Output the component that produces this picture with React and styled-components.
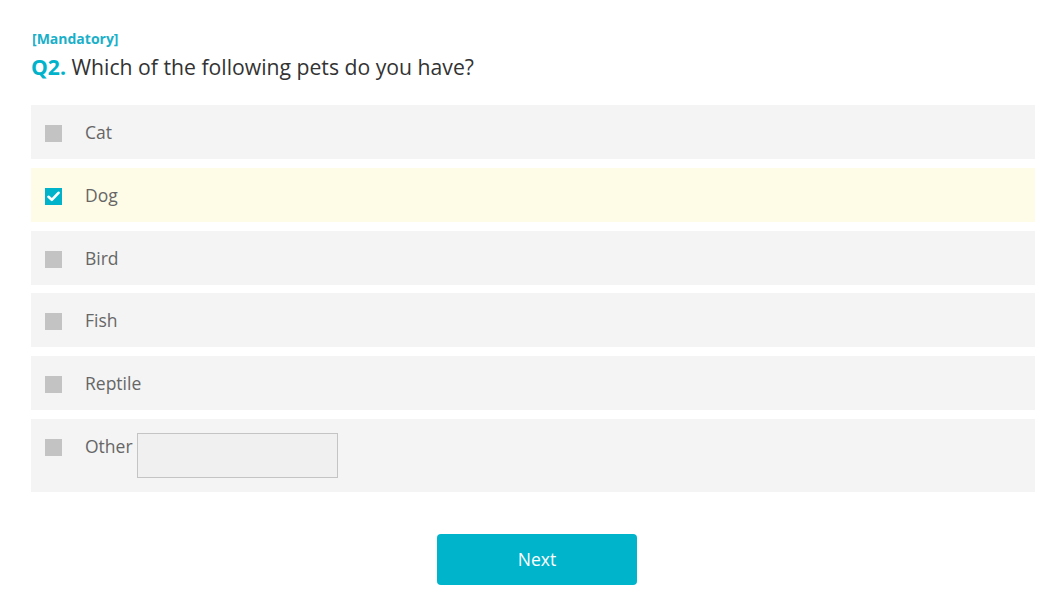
import React, { useState } from "react";
import styled, { createGlobalStyle } from "styled-components";

const GlobalStyle = createGlobalStyle`
  body {
    margin: 0;
    background: #ffffff;
    font-family: "Open Sans", "Noto Sans", sans-serif;
  }
`;

const OPTIONS = ["Cat", "Dog", "Bird", "Fish", "Reptile", "Other"];

function App() {
  const [checked, setChecked] = useState({ Dog: true });
  const [other, setOther] = useState("");

  const toggle = (name) => setChecked({ ...checked, [name]: !checked[name] });

  return (
    <>
      <GlobalStyle />
      <Page>
        <Mandatory>[Mandatory]</Mandatory>
        <Question>
          <QNum>Q2.</QNum> Which of the following pets do you have?
        </Question>

        <OptionList>
          {OPTIONS.map((name) => (
            <OptionRow
              key={name}
              $selected={!!checked[name]}
              onClick={() => toggle(name)}
            >
              <Box $checked={!!checked[name]}>
                {checked[name] && (
                  <svg width="13" height="11" viewBox="0 0 13 11">
                    <path
                      d="M1.5 5.8 L4.8 8.8 L11.5 1.8"
                      fill="none"
                      stroke="#fff"
                      strokeWidth="2.6"
                      strokeLinecap="round"
                      strokeLinejoin="round"
                    />
                  </svg>
                )}
              </Box>
              <Label>{name}</Label>
              {name === "Other" && (
                <OtherInput
                  value={other}
                  onClick={(e) => e.stopPropagation()}
                  onChange={(e) => setOther(e.target.value)}
                />
              )}
            </OptionRow>
          ))}
        </OptionList>

        <Footer>
          <NextButton type="button">Next</NextButton>
        </Footer>
      </Page>
    </>
  );
}

export default App;

const Page = styled.div`
  padding: 30px 27px 0 31px;
`;

const Mandatory = styled.div`
  padding-left: 1px;
  font-size: 14px;
  line-height: 18px;
  font-weight: 700;
  color: #1ab0c9;
`;

const Question = styled.h2`
  margin: 4px 0 0;
  font-size: 21.2px;
  line-height: 30px;
  font-weight: 400;
  color: #333333;
`;

const QNum = styled.span`
  font-weight: 700;
  color: #00b3cb;
`;

const OptionList = styled.div`
  margin-top: 23px;
  display: flex;
  flex-direction: column;
  gap: 8.75px;
`;

const OptionRow = styled.div`
  display: flex;
  align-items: flex-start;
  padding: 14px 14px;
  background: ${(p) => (p.$selected ? "#fefbe6" : "#f4f4f4")};
  cursor: pointer;
`;

const Box = styled.span`
  flex: none;
  width: 17px;
  height: 17px;
  margin-top: 6px;
  display: flex;
  align-items: center;
  justify-content: center;
  background: ${(p) => (p.$checked ? "#00b3cb" : "#c3c3c3")};
`;

const Label = styled.span`
  margin-left: 23px;
  font-size: 17.5px;
  line-height: 26px;
  color: #666666;
`;

const OtherInput = styled.input`
  box-sizing: border-box;
  margin-left: 4px;
  width: 201px;
  height: 45px;
  border: 1px solid #c4c4c4;
  background: #f0f0f0;
  outline: none;
  font: 15px "Open Sans", sans-serif;
  padding: 0 8px;
`;

const Footer = styled.div`
  display: flex;
  justify-content: center;
  padding-left: 8px;
  margin-top: 42px;
`;

const NextButton = styled.button`
  width: 200px;
  height: 51px;
  border: none;
  border-radius: 4px;
  background: #00b4cb;
  color: #ffffff;
  font-family: "Open Sans", sans-serif;
  font-size: 17.5px;
  cursor: pointer;
`;
